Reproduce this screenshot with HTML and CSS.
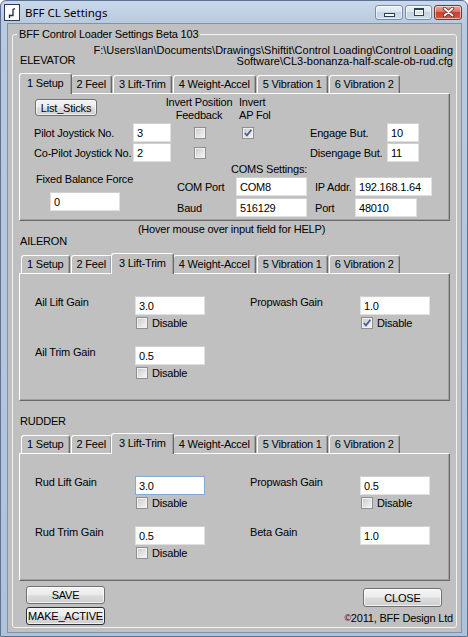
FILE: index.html
```html
<!DOCTYPE html>
<html lang="en">
<head>
    <meta charset="UTF-8">
    <meta name="viewport" content="width=device-width, initial-scale=1.0">
    <title>BFF CL Settings</title>
    <link rel="stylesheet" href="styles.css">
</head>
<body>
    <div class="window">
        <div class="titlebar">
            <div class="app-icon">
                <svg width="16" height="17" viewBox="0 0 16 17">
                    <rect x="0.5" y="0.5" width="15" height="16" fill="#fff" stroke="#2b3a5c"/>
                    <path d="M5.5 14 V10.5 M5.5 11.5 H9 V5.5 L11 4.5" fill="none" stroke="#1c2a4a" stroke-width="1.3"/>
                </svg>
            </div>
            <div class="title">BFF CL Settings</div>
            <div class="caption-buttons">
                <div class="cap-btn min"><span></span></div>
                <div class="cap-btn max"><span></span></div>
                <div class="cap-btn close">
                    <svg width="13" height="10" viewBox="0 0 13 10">
                        <path d="M2.5 1.5 L10.5 8.5 M10.5 1.5 L2.5 8.5" stroke="#5b2b25" stroke-width="3.4" stroke-linecap="round"/>
                        <path d="M2.5 1.5 L10.5 8.5 M10.5 1.5 L2.5 8.5" stroke="#fff" stroke-width="1.8" stroke-linecap="round"/>
                    </svg>
                </div>
            </div>
        </div>

        <div class="client">
            <div class="group">
                <div class="group-title">BFF Control Loader Settings Beta 103</div>

                <div class="head-row">
                    <div class="section-label">ELEVATOR</div>
                    <div class="file-path">F:\Users\Ian\Documents\Drawings\Shiftit\Control Loading\Control Loading<br>Software\CL3-bonanza-half-scale-ob-rud.cfg</div>
                </div>

                <div class="section">
                    <div class="tabs">
                        <div class="tab active">1 Setup</div>
                        <div class="tab">2 Feel</div>
                        <div class="tab">3 Lift-Trim</div>
                        <div class="tab">4 Weight-Accel</div>
                        <div class="tab">5 Vibration 1</div>
                        <div class="tab">6 Vibration 2</div>
                    </div>
                    <div class="tab-page setup-page">
                        <div class="setup-top">
                            <button class="btn list-btn">List_Sticks</button>
                            <div class="col-head invert-pos">Invert Position<br>Feedback</div>
                            <div class="col-head invert-ap">Invert<br>AP Fol</div>
                        </div>
                        <div class="setup-grid">
                            <span>Pilot Joystick No.</span>
                            <input class="textbox" type="text" value="3">
                            <span class="chk"></span>
                            <span class="chk checked"><svg width="10" height="10" viewBox="0 0 10 10"><path d="M1.8 5 L4 7.4 L8.4 1.8" fill="none" stroke="#4b5e9c" stroke-width="1.8"/></svg></span>
                            <span class="pad">Engage But.</span>
                            <input class="textbox" type="text" value="10">

                            <span>Co-Pilot Joystick No.</span>
                            <input class="textbox" type="text" value="2">
                            <span class="chk"></span>
                            <span></span>
                            <span class="pad">Disengage But.</span>
                            <input class="textbox" type="text" value="11">
                        </div>
                        <div class="setup-bottom">
                            <div class="balance">
                                <div class="balance-label">Fixed Balance Force</div>
                                <input class="textbox" type="text" value="0">
                            </div>
                            <div class="coms">
                                <div class="coms-title">COMS Settings:</div>
                                <div class="coms-grid">
                                    <span>COM Port</span>
                                    <input class="textbox" type="text" value="COM8">
                                    <span class="pad">IP Addr.</span>
                                    <input class="textbox" type="text" value="192.168.1.64">
                                    <span>Baud</span>
                                    <input class="textbox" type="text" value="516129">
                                    <span class="pad">Port</span>
                                    <input class="textbox short" type="text" value="48010">
                                </div>
                            </div>
                        </div>
                    </div>
                </div>

                <div class="hint">(Hover mouse over input field for HELP)</div>

                <div class="section-label standalone">AILERON</div>
                <div class="section">
                    <div class="tabs">
                        <div class="tab">1 Setup</div>
                        <div class="tab">2 Feel</div>
                        <div class="tab active">3 Lift-Trim</div>
                        <div class="tab">4 Weight-Accel</div>
                        <div class="tab">5 Vibration 1</div>
                        <div class="tab">6 Vibration 2</div>
                    </div>
                    <div class="tab-page lift-page">
                        <div class="gain-grid">
                            <span class="gain-label">Ail Lift Gain</span>
                            <div class="field">
                                <input class="textbox" type="text" value="3.0">
                                <div class="disable"><span class="chk"></span>Disable</div>
                            </div>
                            <span class="gain-label right">Propwash Gain</span>
                            <div class="field">
                                <input class="textbox" type="text" value="1.0">
                                <div class="disable"><span class="chk checked"><svg width="10" height="10" viewBox="0 0 10 10"><path d="M1.8 5 L4 7.4 L8.4 1.8" fill="none" stroke="#4b5e9c" stroke-width="1.8"/></svg></span>Disable</div>
                            </div>

                            <span class="gain-label">Ail Trim Gain</span>
                            <div class="field">
                                <input class="textbox" type="text" value="0.5">
                                <div class="disable"><span class="chk"></span>Disable</div>
                            </div>
                        </div>
                    </div>
                </div>

                <div class="section-label standalone rudder">RUDDER</div>
                <div class="section">
                    <div class="tabs">
                        <div class="tab">1 Setup</div>
                        <div class="tab">2 Feel</div>
                        <div class="tab active">3 Lift-Trim</div>
                        <div class="tab">4 Weight-Accel</div>
                        <div class="tab">5 Vibration 1</div>
                        <div class="tab">6 Vibration 2</div>
                    </div>
                    <div class="tab-page lift-page">
                        <div class="gain-grid">
                            <span class="gain-label">Rud Lift Gain</span>
                            <div class="field">
                                <input class="textbox focused" type="text" value="3.0">
                                <div class="disable"><span class="chk"></span>Disable</div>
                            </div>
                            <span class="gain-label right">Propwash Gain</span>
                            <div class="field">
                                <input class="textbox" type="text" value="0.5">
                                <div class="disable"><span class="chk"></span>Disable</div>
                            </div>

                            <span class="gain-label">Rud Trim Gain</span>
                            <div class="field">
                                <input class="textbox" type="text" value="0.5">
                                <div class="disable"><span class="chk"></span>Disable</div>
                            </div>
                            <span class="gain-label right">Beta Gain</span>
                            <div class="field">
                                <input class="textbox" type="text" value="1.0">
                            </div>
                        </div>
                    </div>
                </div>

                <div class="footer">
                    <div class="footer-left">
                        <button class="btn">SAVE</button>
                        <button class="btn default">MAKE_ACTIVE</button>
                    </div>
                    <div class="footer-right">
                        <button class="btn close-btn">CLOSE</button>
                        <div class="copyright"><span class="copy">©</span>2011, BFF Design Ltd</div>
                    </div>
                </div>
            </div>
        </div>
    </div>
</body>
</html>
```

FILE: styles.css
```css
:root {
    --face: #c0c0c0;
    --light: #ffffff;
    --shadow: #a0a0a0;
    --dark: #696969;
}

* {
    box-sizing: border-box;
}

body {
    margin: 0;
    font-family: "Liberation Sans", Arial, sans-serif;
    font-size: 11px;
    letter-spacing: -0.2px;
    color: #000;
}

/* window frame */
.window {
    width: 468px;
    height: 637px;
    display: flex;
    flex-direction: column;
    border: 1px solid #5d7290;
    border-radius: 6px 6px 0 0;
    background: linear-gradient(180deg, #cad9ea 0px, #b8cadf 22px, #aec2da 100%);
}

.titlebar {
    height: 22px;
    flex-shrink: 0;
    display: flex;
    align-items: center;
    padding-left: 3px;
}

.app-icon {
    display: flex;
    margin-top: 1px;
}

.title {
    margin-left: 5px;
    font-family: "Noto Sans", sans-serif;
    font-size: 11.5px;
    letter-spacing: 0;
}

.caption-buttons {
    margin-left: auto;
    margin-right: 5px;
    display: flex;
    gap: 2px;
}

.cap-btn {
    width: 28px;
    height: 15px;
    border: 1px solid #7b8ca6;
    border-radius: 3px;
    background: linear-gradient(180deg, #edf2f8 0%, #d9e3ef 45%, #c5d4e6 50%, #cddaea 100%);
    box-shadow: inset 0 0 0 1px rgba(255, 255, 255, 0.55);
    display: flex;
    align-items: center;
    justify-content: center;
}

.cap-btn.max {
    width: 27px;
}

.cap-btn.min span {
    width: 11px;
    height: 4px;
    margin-top: 5px;
    border: 1px solid #2c3e58;
    background: #fff;
}

.cap-btn.max span {
    width: 10px;
    height: 8px;
    border: 1px solid #2c3e58;
    border-top-width: 2px;
    background: #dbe5f1;
    box-shadow: inset 0 0 0 1px #fff;
}

.cap-btn.close {
    border-color: #6f3b34;
    background: linear-gradient(180deg, #eaaa9c 0%, #d8745f 45%, #c5432d 50%, #d05b41 100%);
}

.client {
    flex: 1;
    margin: 0 5px 3px 6px;
    border: 1px solid #8093ad;
    background: var(--face);
    padding: 10px 4px 0 4px;
}

/* group box */
.group {
    position: relative;
    border: 1px solid #f2f2f2;
    border-radius: 3px;
    padding-bottom: 2px;
}

.group-title {
    position: absolute;
    top: -7px;
    left: 4px;
    padding: 0 2px;
    line-height: 13px;
    background: var(--face);
}

.head-row {
    display: flex;
    justify-content: space-between;
    align-items: flex-end;
    padding: 10px 3px 0 7px;
}

.section-label {
    line-height: 13px;
}

.section-label.standalone {
    line-height: 12px;
    padding-left: 7px;
}

.section-label.rudder {
    margin-top: 14px;
}

.file-path {
    text-align: right;
    line-height: 11px;
    letter-spacing: 0;
}

.section {
    padding: 0 6px;
}

/* tabs */
.tabs {
    display: flex;
    align-items: flex-end;
    gap: 1px;
    height: 20px;
    margin-top: 6px;
    padding-left: 2px;
}

.tab {
    height: 18px;
    padding: 0 5px;
    line-height: 17px;
    white-space: nowrap;
    background: var(--face);
    border: 1px solid var(--light);
    border-right-color: var(--dark);
    border-bottom: 0;
    border-radius: 3px 3px 0 0;
    box-shadow: inset -1px 0 var(--shadow);
}

.tab.active {
    position: relative;
    z-index: 1;
    height: 21px;
    margin: 0 -2px -1px;
    padding: 0 7px;
    line-height: 18px;
}

.tab-page {
    height: 128px;
    border: 1px solid var(--light);
    border-right-color: var(--dark);
    border-bottom-color: var(--dark);
    box-shadow: inset -1px -1px var(--shadow);
}

/* controls */
.textbox {
    height: 19px;
    width: 100%;
    margin: 0;
    padding: 1px 3px 0;
    font: inherit;
    letter-spacing: inherit;
    color: #000;
    background: #fff;
    border: 1px solid #e0e0e0;
    border-top-color: #cfcfcf;
    outline: none;
}

.textbox.focused {
    border-color: #86a9d2;
}

.chk {
    width: 12px;
    height: 12px;
    display: inline-flex;
    align-items: center;
    justify-content: center;
    border: 1px solid #8e8f8f;
    background: linear-gradient(135deg, #c8c8c8 0%, #e6e6e6 60%, #f6f6f6 100%);
    box-shadow: inset 0 0 0 1px #f1f1f1;
}

.btn {
    height: 18px;
    padding: 0;
    font: inherit;
    letter-spacing: inherit;
    color: #000;
    border: 1px solid #707070;
    border-radius: 3px;
    background: linear-gradient(180deg, #f4f4f4 0%, #ebebeb 48%, #dcdcdc 52%, #cfcfcf 100%);
    box-shadow: inset 0 0 0 1px rgba(255, 255, 255, 0.7);
}

.btn.default {
    border-color: #2a2f38;
}

/* setup page */
.setup-page {
    padding: 2px 0 0 14px;
}

.setup-top {
    display: flex;
    align-items: flex-start;
    height: 27px;
}

.list-btn {
    width: 62px;
    height: 17px;
    margin: 3px 0 0 1px;
}

.col-head {
    line-height: 13px;
}

.invert-pos {
    width: 70px;
    margin-left: 67px;
    text-align: center;
}

.invert-ap {
    margin-left: 5px;
}

.setup-grid {
    display: grid;
    grid-template-columns: 99px 38px 57px 40px 119px 32px;
    grid-auto-rows: 20px;
    align-items: center;
}

.setup-grid .textbox {
    align-self: start;
}

.setup-grid .chk {
    justify-self: center;
}

.setup-grid .pad {
    padding-left: 42px;
}

.setup-bottom {
    display: flex;
}

.balance {
    width: 143px;
    padding: 10px 0 0 2px;
}

.balance-label {
    line-height: 13px;
}

.balance .textbox {
    width: 70px;
    margin: 6px 0 0 14px;
}

.coms-title {
    line-height: 13px;
    margin-left: 54px;
}

.coms-grid {
    display: grid;
    grid-template-columns: 59px 71px 48px 77px;
    grid-template-rows: 19px 19px;
    row-gap: 2px;
    margin-top: 1px;
    align-items: center;
}

.coms-grid .pad {
    padding-left: 8px;
}

.coms-grid .short {
    width: 62px;
}

/* lift-trim pages */
.lift-page {
    padding: 22px 0 0 15px;
}

.gain-grid {
    display: grid;
    grid-template-columns: 100px 70px 155px 70px;
    align-items: start;
    row-gap: 17px;
}

.gain-label {
    line-height: 13px;
}

.gain-label.right {
    padding-left: 45px;
}

.field {
    display: flex;
    flex-direction: column;
    gap: 2px;
}

.disable {
    display: flex;
    align-items: center;
    gap: 4px;
    margin-left: 1px;
    line-height: 12px;
}

.hint {
    margin-top: 2px;
    padding-right: 6px;
    text-align: center;
    line-height: 12px;
}

/* footer */
.footer {
    display: flex;
    justify-content: space-between;
    padding: 5px 3px 0 13px;
}

.footer-left {
    display: flex;
    flex-direction: column;
    gap: 3px;
}

.footer .btn {
    width: 79px;
}

.footer-right {
    display: flex;
    flex-direction: column;
    align-items: flex-end;
}

.footer .close-btn {
    height: 19px;
    margin: 2px 11px 0 0;
}

.copyright {
    margin-top: 5px;
    line-height: 13px;
}

.copy {
    font-size: 9px;
    vertical-align: 1px;
}
```
